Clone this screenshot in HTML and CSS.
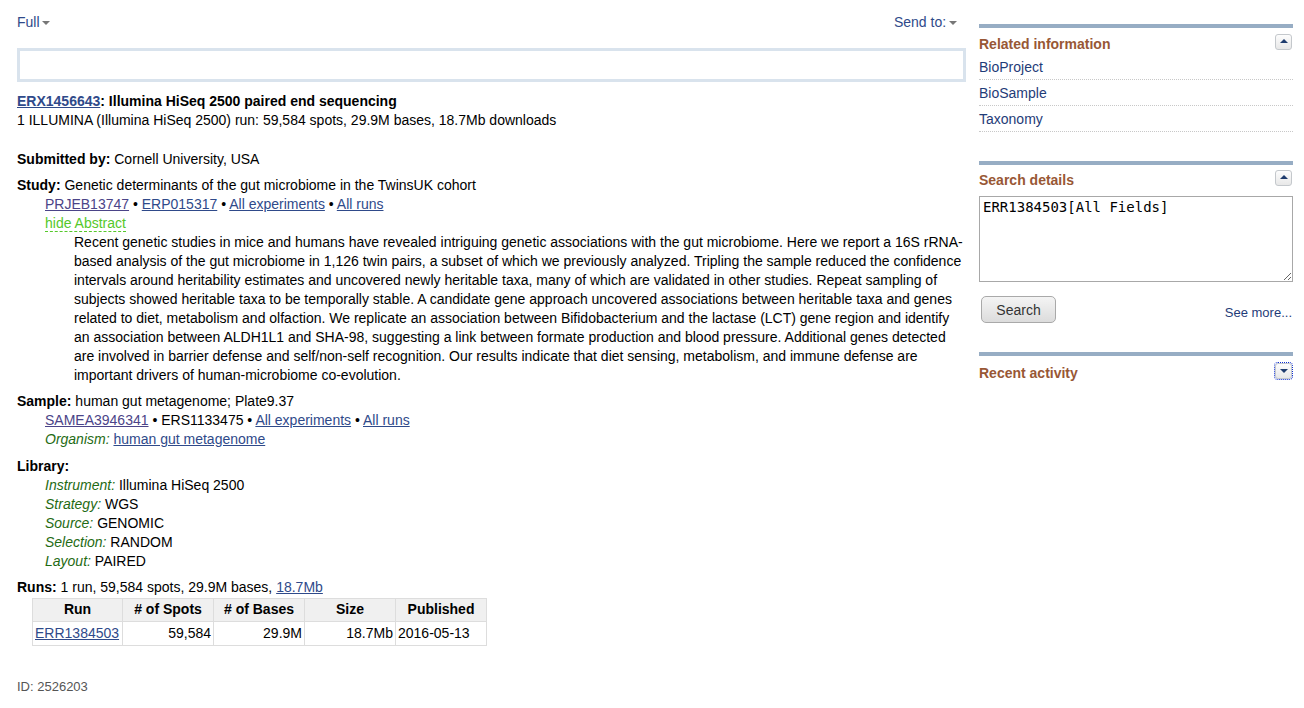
FILE: index.html
```html
<!DOCTYPE html>
<html>
<head>
<meta charset="utf-8">
<title>ERX1456643 - SRA</title>
<link rel="stylesheet" href="styles.css">
</head>
<body>
<div class="page">
  <main class="main">
    <div class="toolbar">
      <span class="menu">Full <span class="caret"></span></span>
      <span class="menu">Send to: <span class="caret"></span></span>
    </div>
    <div class="searchbox"></div>

    <div class="title"><a href="#" class="lnk">ERX1456643</a>: Illumina HiSeq 2500 paired end sequencing</div>
    <div>1 ILLUMINA (Illumina HiSeq 2500) run: 59,584 spots, 29.9M bases, 18.7Mb downloads</div>

    <div class="sect submitted"><b>Submitted by:</b> Cornell University, USA</div>

    <div class="sect">
      <div><b>Study:</b> Genetic determinants of the gut microbiome in the TwinsUK cohort</div>
      <div class="ind"><a href="#" class="lnk visited">PRJEB13747</a> • <a href="#" class="lnk">ERP015317</a> • <a href="#" class="lnk">All experiments</a> • <a href="#" class="lnk">All runs</a></div>
      <div class="ind"><span class="toggle">hide Abstract</span></div>
      <div class="abstract">Recent genetic studies in mice and humans have revealed intriguing genetic associations with the gut microbiome. Here we report a 16S rRNA-based analysis of the gut microbiome in 1,126 twin pairs, a subset of which we previously analyzed. Tripling the sample reduced the confidence intervals around heritability estimates and uncovered newly heritable taxa, many of which are validated in other studies. Repeat sampling of subjects showed heritable taxa to be temporally stable. A candidate gene approach uncovered associations between heritable taxa and genes related to diet, metabolism and olfaction. We replicate an association between Bifidobacterium and the lactase (LCT) gene region and identify an association between ALDH1L1 and SHA-98, suggesting a link between formate production and blood pressure. Additional genes detected are involved in barrier defense and self/non-self recognition. Our results indicate that diet sensing, metabolism, and immune defense are important drivers of human-microbiome co-evolution.</div>
    </div>

    <div class="sect">
      <div><b>Sample:</b> human gut metagenome; Plate9.37</div>
      <div class="ind"><a href="#" class="lnk visited">SAMEA3946341</a> • ERS1133475 • <a href="#" class="lnk">All experiments</a> • <a href="#" class="lnk">All runs</a></div>
      <div class="ind"><i class="lbl">Organism:</i> <a href="#" class="lnk">human gut metagenome</a></div>
    </div>

    <div class="sect library">
      <div><b>Library:</b></div>
      <div class="ind"><i class="lbl">Instrument:</i> Illumina HiSeq 2500</div>
      <div class="ind"><i class="lbl">Strategy:</i> WGS</div>
      <div class="ind"><i class="lbl">Source:</i> GENOMIC</div>
      <div class="ind"><i class="lbl">Selection:</i> RANDOM</div>
      <div class="ind"><i class="lbl">Layout:</i> PAIRED</div>
    </div>

    <div class="sect">
      <div><b>Runs:</b> 1 run, 59,584 spots, 29.9M bases, <a href="#" class="lnk">18.7Mb</a></div>
      <table class="runs">
        <thead>
          <tr><th class="c1">Run</th><th class="c2"># of Spots</th><th class="c3"># of Bases</th><th class="c4">Size</th><th class="c5">Published</th></tr>
        </thead>
        <tbody>
          <tr><td><a href="#" class="lnk">ERR1384503</a></td><td class="num">59,584</td><td class="num">29.9M</td><td class="num">18.7Mb</td><td>2016-05-13</td></tr>
        </tbody>
      </table>
    </div>

    <div class="uid">ID: 2526203</div>
  </main>

  <aside class="side">
    <section class="portlet p1">
      <div class="phead"><span>Related information</span><span class="tog up"></span></div>
      <ul class="plist">
        <li><a href="#">BioProject</a></li>
        <li><a href="#">BioSample</a></li>
        <li><a href="#">Taxonomy</a></li>
      </ul>
    </section>

    <section class="portlet p2">
      <div class="phead"><span>Search details</span><span class="tog up"></span></div>
      <textarea class="query">ERR1384503[All Fields]</textarea>
      <div class="qactions">
        <button class="btn">Search</button>
        <a href="#" class="seemore">See more...</a>
      </div>
    </section>

    <section class="portlet p3">
      <div class="phead"><span>Recent activity</span><span class="tog down focus"></span></div>
    </section>
  </aside>
</div>
</body>
</html>
```

FILE: styles.css
```css
html, body {
  margin: 0;
  padding: 0;
  background: #fff;
}
body {
  font-family: "Liberation Sans", Arial, sans-serif;
  font-size: 14px;
  line-height: 19px;
  color: #000;
}
.page {
  display: flex;
  gap: 13px;
  padding: 0 11px 0 17px;
}
.main {
  width: 949px;
  flex: none;
}
.side {
  width: 314px;
  flex: none;
  padding-top: 24px;
}

.toolbar {
  display: flex;
  justify-content: space-between;
  padding: 13px 9px 0 0;
}
.menu {
  color: #2f4a8a;
}
.caret {
  display: inline-block;
  width: 0;
  height: 0;
  border-left: 4px solid transparent;
  border-right: 4px solid transparent;
  border-top: 4px solid #777;
  vertical-align: middle;
  margin-left: -1px;
}
.searchbox {
  margin-top: 16px;
  height: 28px;
  border: 3px solid #d9e3ed;
}
.title {
  margin-top: 10px;
  font-weight: bold;
}
.lnk {
  color: #2f4a8a;
  text-decoration: underline;
}
.lnk.visited {
  color: #4b4488;
}
.sect {
  margin-top: 7px;
}
.submitted {
  margin-top: 20px;
}
.library {
  margin-top: 8px;
}
.ind {
  padding-left: 28px;
}
.toggle {
  color: #55c82a;
  border-bottom: 1px dashed #55c82a;
}
.abstract {
  padding-left: 57px;
  padding-right: 2px;
}
.lbl {
  color: #1f6b14;
}
.runs {
  margin: 1px 0 0 15px;
  border-collapse: collapse;
}
.runs th, .runs td {
  border: 1px solid #ddd;
  padding: 1px 2px 2px;
  line-height: 19px;
}
.runs th {
  background: #f0f0f0;
  font-weight: bold;
  text-align: center;
}
.runs td {
  padding-top: 2px;
}
.runs .c1 { width: 85px; }
.runs .c2 { width: 86px; }
.runs .c3 { width: 86px; }
.runs .c4 { width: 86px; }
.runs .c5 { width: 86px; }
.runs .num {
  text-align: right;
}
.uid {
  margin-top: 31px;
  font-size: 13px;
  color: #555;
}

.portlet {
  border-top: 4px solid #97adc4;
}
.p1 {
  margin-bottom: 29px;
}
.p2 {
  margin-bottom: 29px;
}
.phead {
  display: flex;
  justify-content: space-between;
  padding-top: 7px;
  color: #985735;
  font-weight: bold;
  font-size: 14px;
  line-height: 19px;
}
.p2 .phead {
  padding-top: 6px;
}
.p3 .phead {
  padding-top: 8px;
}
.tog {
  width: 15px;
  height: 14px;
  margin: -1px 1px 0 0;
  border: 1px solid #c4c8cc;
  border-radius: 3px;
  background: linear-gradient(#fdfdfd, #e8e8e8);
  position: relative;
  box-sizing: content-box;
}
.tog::after {
  content: "";
  position: absolute;
  left: 4px;
  width: 0;
  height: 0;
  border-left: 4px solid transparent;
  border-right: 4px solid transparent;
}
.tog.up::after {
  top: 4px;
  border-bottom: 4px solid #1f3c6e;
}
.tog.down::after {
  top: 5px;
  border-top: 4px solid #1f3c6e;
}
.tog.focus {
  outline: 1px dotted #1030d0;
  outline-offset: 0;
}
.plist {
  list-style: none;
  margin: 0;
  padding: 0;
}
.plist li {
  padding: 4px 0 2px;
  border-bottom: 1px dotted #c8c8c8;
}
.plist a {
  color: #1f3c78;
  text-decoration: none;
}
.query {
  display: block;
  margin-top: 6px;
  width: 314px;
  height: 86px;
  box-sizing: border-box;
  border: 1px solid #a8a8a8;
  padding: 2px 3px;
  font-family: "DejaVu Sans Mono", monospace;
  font-size: 14px;
  line-height: 17px;
  resize: vertical;
}
.qactions {
  display: flex;
  justify-content: space-between;
  align-items: flex-end;
  margin-top: 14px;
  padding-left: 2px;
}
.btn {
  width: 75px;
  height: 27px;
  border: 1px solid #a9a9a9;
  border-radius: 5px;
  background: linear-gradient(#f4f4f4, #dcdcdc);
  font-family: "Liberation Sans", Arial, sans-serif;
  font-size: 14px;
  color: #333;
  padding: 0;
}
.seemore {
  font-size: 13px;
  color: #1f3c78;
  text-decoration: none;
  line-height: 16px;
  margin: 0 1px 2px 0;
}
```
